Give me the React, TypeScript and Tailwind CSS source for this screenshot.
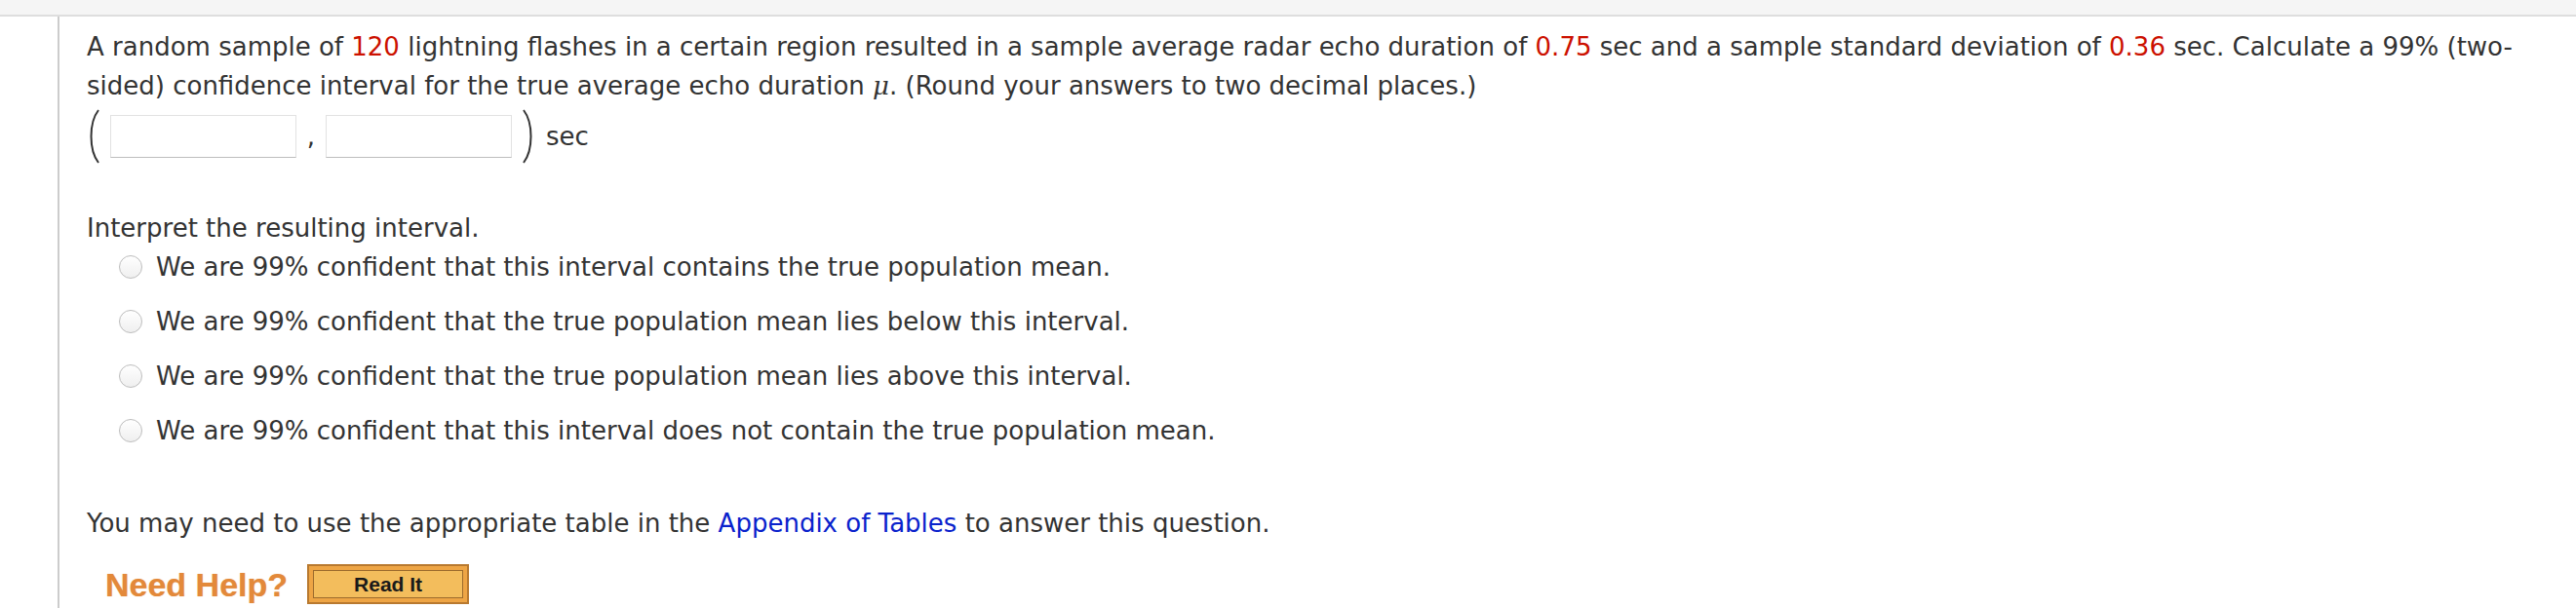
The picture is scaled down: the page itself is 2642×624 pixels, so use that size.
import React from "react";

function Paren({ right = false }: { right?: boolean }) {
  return (
    <svg width="14" height="56" viewBox="0 0 14 56" className="shrink-0">
      {right ? (
        <path d="M2 1 C 12 14, 12 42, 2 55" fill="none" stroke="#333" strokeWidth="2" />
      ) : (
        <path d="M12 1 C 2 14, 2 42, 12 55" fill="none" stroke="#333" strokeWidth="2" />
      )}
    </svg>
  );
}

function Radio() {
  return (
    <span className="w-[24px] h-[24px] shrink-0 rounded-full border border-[#bdbdbd] bg-gradient-to-b from-white to-[#efefef]" />
  );
}

const options = [
  "We are 99% confident that this interval contains the true population mean.",
  "We are 99% confident that the true population mean lies below this interval.",
  "We are 99% confident that the true population mean lies above this interval.",
  "We are 99% confident that this interval does not contain the true population mean.",
];

export default function App() {
  return (
    <div className="w-[2642px] h-[624px] overflow-hidden bg-white text-[#333333] font-['DejaVu_Sans',Verdana,sans-serif]">
      <div className="h-[17px] bg-[#f5f5f5] border-b-2 border-[#dedede]" />
      <div className="flex h-[607px]">
        <div className="w-[61px] shrink-0 border-r-2 border-[#cccccc]" />
        <div className="flex-1 pl-[28px] pr-[30px] pt-[11px] text-[26px] leading-[40px]">
          <p>
            A random sample of <span className="text-[#cc1100]">120</span> lightning flashes in a certain
            region resulted in a sample average radar echo duration of{" "}
            <span className="text-[#cc1100]">0.75</span> sec and a sample standard deviation of{" "}
            <span className="text-[#cc1100]">0.36</span> sec. Calculate a 99% (two-sided) confidence
            interval for the true average echo duration <i className="font-['DejaVu_Serif',serif]">μ</i>. (Round your
            answers to two decimal places.)
          </p>
          <div className="mt-[2px] flex h-[59px] items-center">
            <Paren />
            <input
              type="text"
              className="ml-[10px] h-[44px] w-[191px] border border-[#e2e2e2] border-b-[#bdbdbd] bg-white outline-none"
            />
            <span className="w-[30px] text-center">,</span>
            <input
              type="text"
              className="h-[44px] w-[191px] border border-[#e2e2e2] border-b-[#bdbdbd] bg-white outline-none"
            />
            <span className="ml-[10px]">
              <Paren right />
            </span>
            <span className="ml-[11px]">sec</span>
          </div>
          <p className="mt-[45px]">Interpret the resulting interval.</p>
          <div className="flex flex-col gap-[16px] pl-[33px]">
            {options.map((o) => (
              <label key={o} className="flex h-[40px] items-center gap-[14px]">
                <Radio />
                <span>{o}</span>
              </label>
            ))}
          </div>
          <p className="mt-[55px]">
            You may need to use the appropriate table in the{" "}
            <span className="text-[#0a22cc]">Appendix of Tables</span> to answer this question.
          </p>
          <div className="mt-[22px] flex h-[41px] items-center pl-[19px]">
            <span className="font-['Liberation_Sans',Arial,sans-serif] text-[34px] font-bold leading-none text-[#e3893a] [text-shadow:0_0_1px_rgba(227,137,58,0.6)]">
              Need Help?
            </span>
            <div className="ml-[20px] flex h-[41px] w-[166px] items-center justify-center border-2 border-[#b8792f] bg-[#eea545] p-[4px]">
              <div className="flex h-full w-full items-center justify-center border border-[#9c6a2c] bg-[#f3bd5c]">
                <span className="font-['Liberation_Sans',Arial,sans-serif] text-[21px] font-bold leading-none text-[#1a1a1a]">
                  Read It
                </span>
              </div>
            </div>
          </div>
        </div>
      </div>
    </div>
  );
}
